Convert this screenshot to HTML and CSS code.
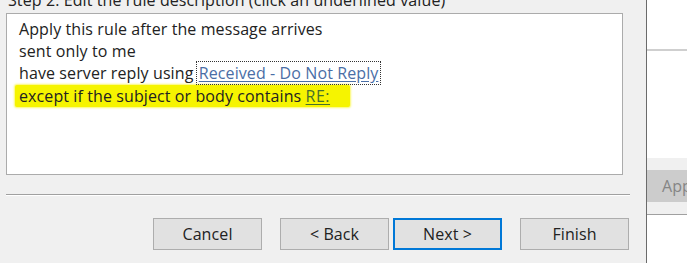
FILE: index.html
```html
<!DOCTYPE html>
<html>
<head>
<meta charset="utf-8">
<link rel="stylesheet" href="styles.css">
</head>
<body>
<div class="screen">
  <div class="dialog">
    <div class="step-title">Step 2: Edit the rule description (click an underlined value)</div>
    <div class="desc-box">
      <div class="line">Apply this rule after the message arrives</div>
      <div class="line">sent only to me</div>
      <div class="line">have server reply using <span class="link focus">Received - Do Not Reply</span></div>
      <div class="line"><span class="hl">except if the subject or body contains <span class="link re">RE:</span></span></div>
    </div>
    <div class="separator"></div>
    <div class="buttons">
      <button class="btn">Cancel</button>
      <button class="btn back">&lt; Back</button>
      <button class="btn primary">Next &gt;</button>
      <button class="btn finish">Finish</button>
    </div>
  </div>
  <div class="side">
    <div class="side-top"></div>
    <div class="side-mid"></div>
    <div class="side-band"></div>
    <div class="side-btn">Apply</div>
    <div class="side-band2"></div>
    <div class="side-bottom"></div>
  </div>
</div>
</body>
</html>
```

FILE: styles.css
```css
html, body {
  margin: 0;
  padding: 0;
  background: #f0f0f0;
  overflow: hidden;
}
body {
  width: 687px;
  height: 263px;
  font-family: "Open Sans", "Noto Sans", "Liberation Sans", sans-serif;
  font-size: 16px;
  font-weight: 500;
  letter-spacing: 0.1px;
  color: #222222;
}
.screen {
  display: flex;
  height: 263px;
}
.dialog {
  width: 646px;
  flex: none;
  display: flex;
  flex-direction: column;
}
.step-title {
  height: 13px;
  line-height: 20px;
  margin-top: -10px;
  padding-left: 8px;
  white-space: nowrap;
  overflow: visible;
}
.desc-box {
  margin: 10px 0 0 6px;
  width: 617px;
  height: 162px;
  background: #ffffff;
  border: 1px solid #ababab;
  padding: 4px 0 0 12px;
  box-sizing: border-box;
}
.line {
  height: 22px;
  line-height: 22px;
  white-space: nowrap;
}
.link {
  color: #4a6ea6;
  text-decoration: underline;
  text-underline-offset: 2px;
}
.focus {
  outline: 1px dotted #333;
  outline-offset: 0;
  padding: 0 2px;
  margin-left: -1px;
}
.hl {
  display: inline-block;
  background: #f6f400;
  margin: 1px 0 0 -4px;
  padding: 0 20px 0 4px;
  line-height: 22px;
  box-shadow: 0 0 2px 1px rgba(246, 244, 0, 0.6);
  border-radius: 2px;
}
.re {
  color: #47702c;
  letter-spacing: 0.5px;
}
.separator {
  margin: 19px 0 0 6px;
  width: 624px;
  height: 1px;
  background: #a0a0a0;
  border-bottom: 1px solid #ffffff;
}
.buttons {
  display: flex;
  justify-content: flex-end;
  padding-right: 17px;
  margin-top: 22px;
}
.btn {
  width: 109px;
  height: 32px;
  background: #e1e1e1;
  border: 1px solid #adadad;
  font-family: inherit;
  font-size: 16px;
  font-weight: 500;
  letter-spacing: 0.1px;
  color: #222222;
  padding: 0;
  margin: 0 0 0 18px;
  box-sizing: border-box;
}
.btn.primary {
  border: 2px solid #0078d7;
  margin-left: 4px;
}
.side {
  flex: 1;
  border-left: 1px solid #6b6b6b;
  background: #ffffff;
  display: flex;
  flex-direction: column;
}
.side-top {
  height: 49px;
  border-bottom: 2px solid #cfcfcf;
}
.side-mid {
  height: 107px;
}
.side-band {
  height: 12px;
  background: #f0f0f0;
}
.side-btn {
  height: 32px;
  background: #cccccc;
  color: #858585;
  line-height: 32px;
  padding-left: 15px;
  white-space: nowrap;
  overflow: hidden;
}
.side-band2 {
  height: 12px;
  background: #f0f0f0;
  border-bottom: 1px solid #a0a0a0;
}
.side-bottom {
  flex: 1;
}
```
